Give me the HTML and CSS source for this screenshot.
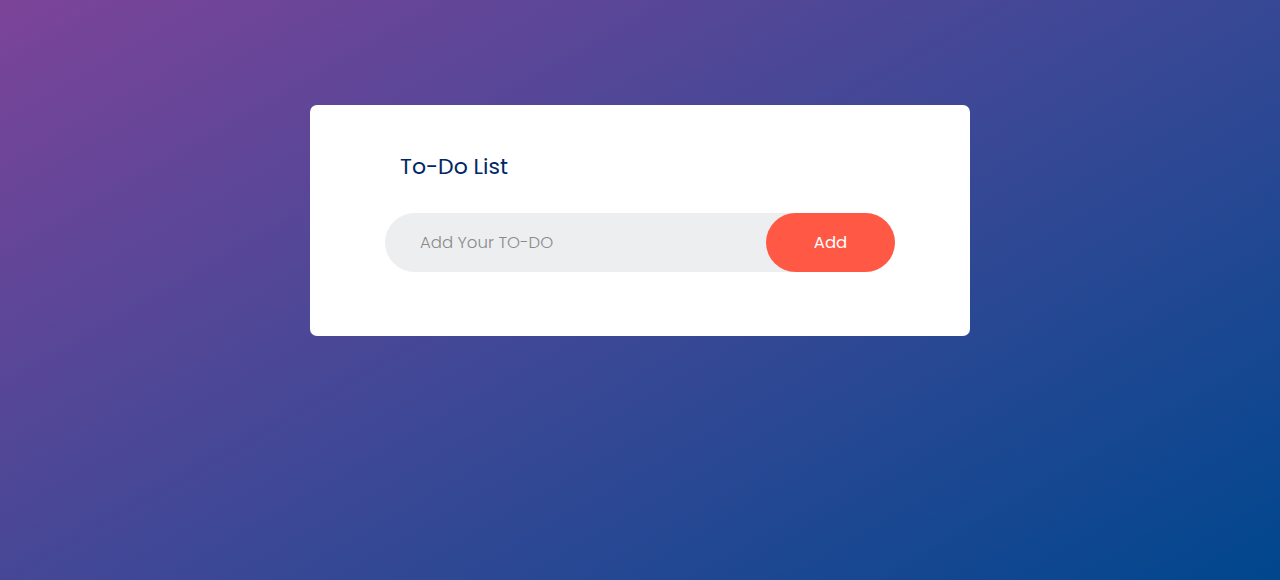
FILE: index.html
```html
<!DOCTYPE html>
<html lang="en">
<head>
<meta charset="utf-8">
<title>To-Do List</title>
<link rel="stylesheet" href="styles.css">
</head>
<body>
<div class="container">
  <div class="todo-app">
    <h2 class="title">To-Do List</h2>
    <div class="row">
      <input class="todo-input" type="text" placeholder="Add Your TO-DO">
      <button class="add-btn">Add</button>
    </div>
  </div>
</div>
</body>
</html>
```
FILE: styles.css
```css
* { box-sizing: border-box; }
html, body { margin: 0; padding: 0; }
body {
  font-family: Poppins, Inter, "Noto Sans", sans-serif;
  min-height: 580px;
  background: linear-gradient(150deg, #7c4499 0%, #3e4896 50%, #00478e 100%);
}
.container {
  padding-top: 105px;
  display: flex;
  justify-content: center;
}
.todo-app {
  width: 660px;
  height: 231px;
  background: #fff;
  border-radius: 7px;
  padding: 47px 75px 64px;
}
.title {
  margin: 0 0 31px 15px;
  font-size: 22px;
  line-height: 30px;
  font-weight: 400;
  color: #002765;
}
.row {
  display: flex;
  align-items: center;
  background: #edeef0;
  border-radius: 30px;
  height: 59px;
  padding-left: 35px;
}
.todo-input {
  flex: 1;
  border: none;
  outline: none;
  background: transparent;
  font-family: inherit;
  font-size: 16.5px;
  font-weight: 300;
  color: #555;
  padding: 0;
}
.todo-input::placeholder { color: #8a8a8a; }
.add-btn {
  width: 129px;
  height: 59px;
  border: none;
  border-radius: 30px;
  background: #ff5945;
  color: #fff;
  font-family: inherit;
  font-size: 16.5px;
  font-weight: 400;
  cursor: pointer;
}
```
